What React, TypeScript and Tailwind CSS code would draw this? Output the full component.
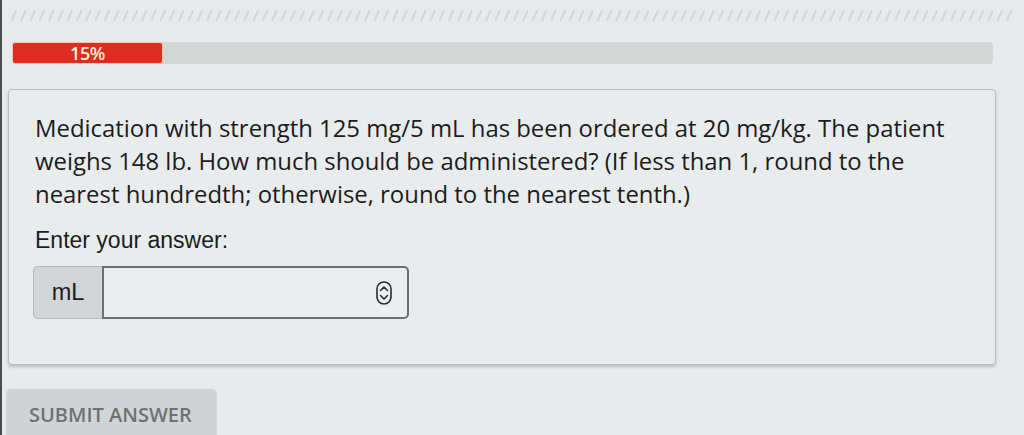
import React from "react";

function Stripe() {
  const marks = [];
  for (let i = 0; i < 108; i++) {
    const x = 10 + i * 9.3;
    marks.push(
      <line key={i} x1={x} y1={20} x2={x + 4} y2={11} stroke="#d3d7d7" strokeWidth={2.2} strokeLinecap="round" />
    );
  }
  return (
    <div className="w-full h-[24px] shrink-0">
      <svg width="1022" height="24" className="block" viewBox="0 0 1022 24">
        {marks}
      </svg>
    </div>
  );
}

function Spinner() {
  return (
    <svg width="16" height="24" viewBox="0 0 16 24" fill="none">
      <rect x="1" y="1" width="14" height="22" rx="7" stroke="#2a2a2a" strokeWidth="1.6" />
      <path d="M4.5 9.5 L8 6 L11.5 9.5" stroke="#2a2a2a" strokeWidth="1.6" strokeLinecap="round" strokeLinejoin="round" />
      <path d="M4.5 14.5 L8 18 L11.5 14.5" stroke="#2a2a2a" strokeWidth="1.6" strokeLinecap="round" strokeLinejoin="round" />
    </svg>
  );
}

export default function App() {
  return (
    <div className="w-[1024px] h-[435px] overflow-hidden bg-[#e7eaea] border-l-2 border-[#4a4d4f] flex flex-col">
      <Stripe />
      <div className="ml-[10px] mt-[18px] w-[981px] h-[22px] shrink-0 rounded-[4px] bg-[#d4d6d6] flex">
        <div className="w-[151px] h-full rounded-[3px] bg-[#db2d22] border border-[#f0c9a8] flex items-center justify-center">
          <span className="text-[18px] font-semibold tracking-[-0.4px] text-[#fbecd9] [font-family:'Open_Sans',sans-serif] leading-none">15%</span>
        </div>
      </div>
      <div className="ml-[6px] mt-[25px] w-[988px] h-[276px] shrink-0 rounded-[4px] border border-[#b9bebe] bg-[#e9ecec] shadow-[0_2px_3px_rgba(0,0,0,0.18)] px-[26px] pt-[21px]">
        <p className="text-[23.9px] leading-[33px] text-[#1c1c1c] [font-family:'Open_Sans',sans-serif]">
          Medication with strength 125 mg/5 mL has been ordered at 20 mg/kg. The patient weighs 148 lb. How much should be administered? (If less than 1, round to the nearest hundredth; otherwise, round to the nearest tenth.)
        </p>
        <div className="mt-[17px] text-[23px] leading-[27px] text-[#1c1c1c] [font-family:'Liberation_Sans',Arial,sans-serif]">
          Enter your answer:
        </div>
        <div className="-ml-[2px] mt-[12px] flex w-[376px] h-[53px]">
          <div className="w-[69px] h-full flex items-center justify-center bg-[#d2d5d5] border border-[#b3b7b7] border-r-0 rounded-l-[5px] text-[23.5px] text-[#1c1c1c] [font-family:'Liberation_Sans',Arial,sans-serif]">
            mL
          </div>
          <div className="flex-1 h-full border-2 border-[#6b6f71] rounded-r-[5px] bg-[#ebeeee] flex items-center justify-end pr-[15px]">
            <Spinner />
          </div>
        </div>
      </div>
      <div className="ml-[4px] mt-[24px] w-[211px] h-[60px] shrink-0 rounded-t-[5px] bg-[#d0d4d5] pl-[23px] pt-[11px]">
        <span className="text-[20px] font-semibold text-[#6c7276] [font-family:'Open_Sans',sans-serif]">SUBMIT ANSWER</span>
      </div>
    </div>
  );
}
